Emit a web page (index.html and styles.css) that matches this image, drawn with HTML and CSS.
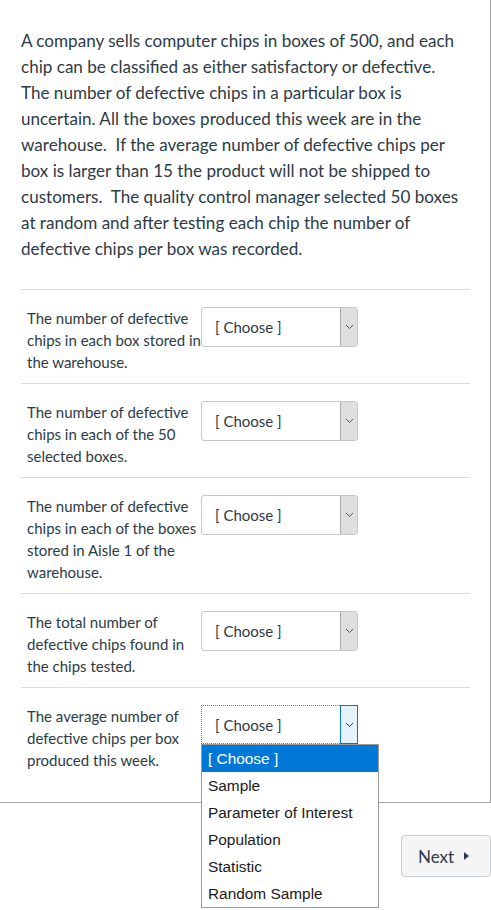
FILE: index.html
```html
<!DOCTYPE html>
<html lang="en">
<head>
<meta charset="utf-8">
<title>Quiz question</title>
<link rel="stylesheet" href="styles.css">
</head>
<body>
<div class="card">
  <p class="stem">A company sells computer chips in boxes of 500, and each chip can be classified as either satisfactory or defective. The number of defective chips in a particular box is uncertain. All the boxes produced this week are in the warehouse.&nbsp; If the average number of defective chips per box is larger than 15 the product will not be shipped to customers.&nbsp; The quality control manager selected 50 boxes at random and after testing each chip the number of defective chips per box was recorded.</p>

  <div class="row">
    <div class="label">The number of defective chips in each box stored in the warehouse.</div>
    <div class="select"><span class="sel-text">[ Choose ]</span><span class="sel-arrow"><svg width="9" height="6" viewBox="0 0 9 6"><path d="M1 1l3.5 3.5L8 1" fill="none" stroke="#555" stroke-width="1"/></svg></span></div>
  </div>

  <div class="row">
    <div class="label">The number of defective chips in each of the 50 selected boxes.</div>
    <div class="select"><span class="sel-text">[ Choose ]</span><span class="sel-arrow"><svg width="9" height="6" viewBox="0 0 9 6"><path d="M1 1l3.5 3.5L8 1" fill="none" stroke="#555" stroke-width="1"/></svg></span></div>
  </div>

  <div class="row">
    <div class="label">The number of defective chips in each of the boxes stored in Aisle 1 of the warehouse.</div>
    <div class="select"><span class="sel-text">[ Choose ]</span><span class="sel-arrow"><svg width="9" height="6" viewBox="0 0 9 6"><path d="M1 1l3.5 3.5L8 1" fill="none" stroke="#555" stroke-width="1"/></svg></span></div>
  </div>

  <div class="row">
    <div class="label">The total number of defective chips found in the chips tested.</div>
    <div class="select"><span class="sel-text">[ Choose ]</span><span class="sel-arrow"><svg width="9" height="6" viewBox="0 0 9 6"><path d="M1 1l3.5 3.5L8 1" fill="none" stroke="#555" stroke-width="1"/></svg></span></div>
  </div>

  <div class="row last">
    <div class="label">The average number of defective chips per box produced this week.</div>
    <div class="select-wrap">
      <div class="select focused"><span class="sel-text">[ Choose ]</span><span class="sel-arrow"><svg width="9" height="6" viewBox="0 0 9 6"><path d="M1 1l3.5 3.5L8 1" fill="none" stroke="#333" stroke-width="1"/></svg></span></div>
      <ul class="options">
        <li class="active">[ Choose ]</li>
        <li>Sample</li>
        <li>Parameter of Interest</li>
        <li>Population</li>
        <li>Statistic</li>
        <li>Random Sample</li>
      </ul>
    </div>
  </div>
</div>

<div class="footer">
  <button class="next">Next <span class="tri"></span></button>
</div>
</body>
</html>
```

FILE: styles.css
```css
html, body {
  margin: 0;
  padding: 0;
  background: #fff;
}

html {
  min-height: 910px;
}

body {
  min-height: 910px;
  font-family: Lato, "Liberation Sans", sans-serif;
  color: #2d3b45;
}

.card {
  width: 491px;
  box-sizing: border-box;
  padding: 28px 20px 0 21px;
  border-right: 1px solid #a5a5a5;
  border-bottom: 1px solid #a5a5a5;
}

.stem {
  margin: 0 0 27px 0;
  max-width: 444px;
  font-size: 17.08px;
  line-height: 26px;
}

.row {
  display: flex;
  align-items: flex-start;
  border-top: 1px solid #dcdcdc;
  padding: 17px 0 10px 6px;
}

.row.last {
  padding-bottom: 31px;
}

.label {
  width: 174px;
  font-size: 15px;
  line-height: 22px;
}

.select {
  width: 157px;
  height: 40px;
  box-sizing: border-box;
  border: 1px solid #c8c8c8;
  border-radius: 3px;
  display: flex;
  align-items: stretch;
  background: #fff;
  overflow: hidden;
}

.sel-text {
  flex: 1;
  font-size: 15px;
  padding: 10px 0 0 13px;
  color: #2d3b45;
}

.sel-arrow {
  width: 16px;
  background: #dedede;
  border-left: 1px solid #ababab;
  display: flex;
  align-items: center;
  justify-content: center;
}

.select-wrap {
  position: relative;
  z-index: 2;
}

.select.focused {
  border: 1px dotted #777;
  border-radius: 0;
  height: 39px;
  overflow: visible;
}

.select.focused .sel-arrow {
  background: #e5f1fb;
  border: 1px solid #0078d7;
  margin: -1px -1px -1px 0;
}

.options {
  position: absolute;
  left: 0;
  top: 39px;
  width: 178px;
  box-sizing: border-box;
  margin: 0;
  padding: 0;
  list-style: none;
  background: #fff;
  border: 1px solid #9a9a9a;
  font-family: "Liberation Sans", Arial, sans-serif;
  font-size: 15.4px;
  color: #1a1a1a;
}

.options li {
  height: 27px;
  line-height: 27px;
  padding-left: 6px;
}

.options li.active {
  background: #0078d7;
  color: #fff;
}

.footer {
  display: flex;
  justify-content: flex-end;
  padding-top: 32px;
  width: 491px;
}

.next {
  width: 90px;
  height: 42px;
  box-sizing: border-box;
  background: #f5f5f5;
  border: 1px solid #c7cdd1;
  border-radius: 4px;
  font-family: Lato, "Liberation Sans", sans-serif;
  font-size: 17px;
  color: #2d3b45;
  display: flex;
  align-items: center;
  justify-content: flex-start;
  gap: 10px;
  padding: 0 0 0 16px;
}

.tri {
  width: 0;
  height: 0;
  border-top: 4px solid transparent;
  border-bottom: 4px solid transparent;
  border-left: 5px solid #2d3b45;
}
```
